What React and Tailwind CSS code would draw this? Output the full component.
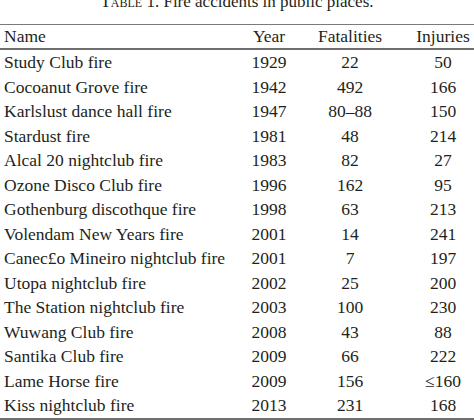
import React from "react";

const rows = [
  ["Study Club fire", "1929", "22", "50"],
  ["Cocoanut Grove fire", "1942", "492", "166"],
  ["Karlslust dance hall fire", "1947", "80–88", "150"],
  ["Stardust fire", "1981", "48", "214"],
  ["Alcal 20 nightclub fire", "1983", "82", "27"],
  ["Ozone Disco Club fire", "1996", "162", "95"],
  ["Gothenburg discothque fire", "1998", "63", "213"],
  ["Volendam New Years fire", "2001", "14", "241"],
  ["Canec£o Mineiro nightclub fire", "2001", "7", "197"],
  ["Utopa nightclub fire", "2002", "25", "200"],
  ["The Station nightclub fire", "2003", "100", "230"],
  ["Wuwang Club fire", "2008", "43", "88"],
  ["Santika Club fire", "2009", "66", "222"],
  ["Lame Horse fire", "2009", "156", "≤160"],
  ["Kiss nightclub fire", "2013", "231", "168"],
];

const grid = "grid grid-cols-[232px_74px_88px_1fr] items-center font-['Liberation_Serif',serif]";

export default function App() {
  return (
    <div className="w-[474px] h-[420px] overflow-hidden bg-white text-[#231f20] font-['Liberation_Serif',serif]">
      <div className="h-[24px] overflow-hidden flex justify-center">
        <div className="-mt-[7px] text-[17px] leading-[17px] whitespace-nowrap">
          <span className="[font-variant:small-caps]">Table</span> 1. Fire accidents in public places.
        </div>
      </div>
      <div className="h-px bg-[#7a7a7a]" />
      <div className={`${grid} h-[23px] text-[17.5px] leading-[23px]`}>
        <div className="pl-[4px]">Name</div>
        <div className="text-center">Year</div>
        <div className="text-center">Fatalities</div>
        <div className="text-center pl-[18px]">Injuries</div>
      </div>
      <div className="h-[2px] bg-[#6f6f6f]" />
      {rows.map((r, i) => (
        <div key={i} className={`${grid} h-[24.5px] text-[17.5px] leading-[24.5px]`}>
          <div className="pl-[4px] whitespace-nowrap">{r[0]}</div>
          <div className="text-center">{r[1]}</div>
          <div className="text-center">{r[2]}</div>
          <div className="text-center pl-[18px]">{r[3]}</div>
        </div>
      ))}
      <div className="h-[2px] bg-[#6f6f6f]" />
    </div>
  );
}
